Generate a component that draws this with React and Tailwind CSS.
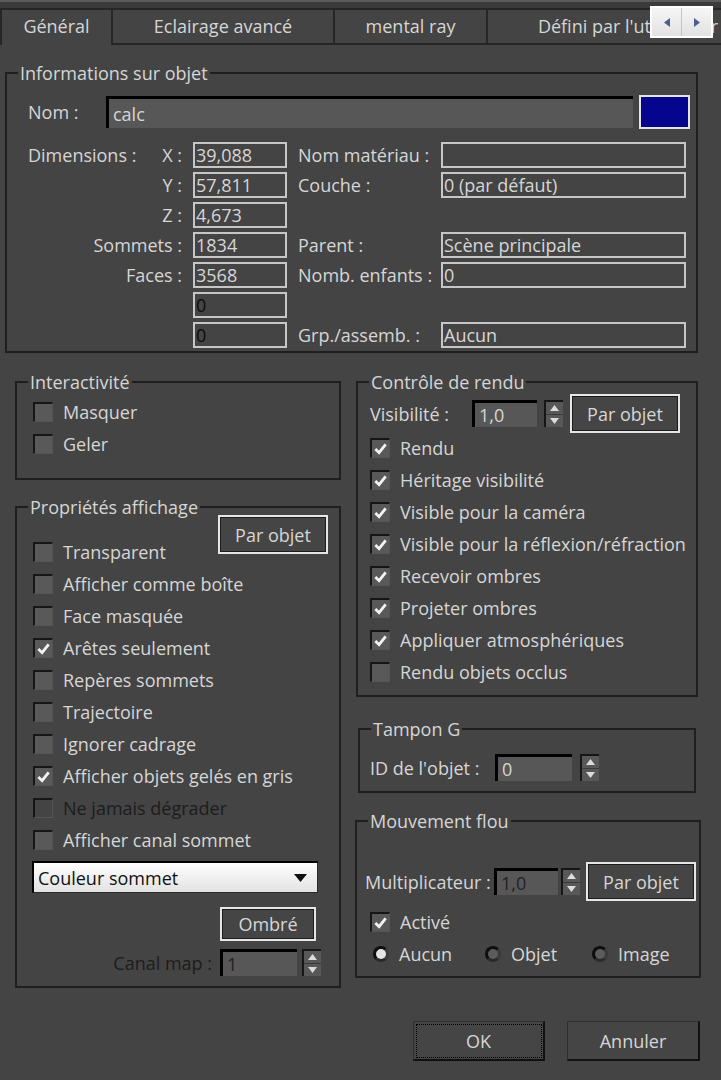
import React from "react";

const Tick = () => (
  <svg width="15" height="15" viewBox="0 0 16 16">
    <path d="M2.5 8.5 L6.5 12.5 L13.5 3.5" fill="none" stroke="#f2f2f2" strokeWidth="3" />
  </svg>
);

const Group = ({ title, className, children }) => (
  <fieldset className={`min-w-0 border-2 border-[#1f1f1f] ${className}`}>
    <legend className="ml-[11px] px-[2px] leading-[22px]">{title}</legend>
    {children}
  </fieldset>
);

const Check = ({ label, checked, disabled }) => (
  <div className="flex h-[32px] items-center">
    <span
      className={`flex h-[20px] w-[20px] shrink-0 items-center justify-center border-t-2 border-l-2 border-r border-b border-t-[#161616] border-l-[#161616] border-r-[#555] border-b-[#555] ${
        disabled ? "bg-[#444]" : "bg-[#595959]"
      }`}
    >
      {checked && <Tick />}
    </span>
    <span className={`ml-[10px] whitespace-nowrap ${disabled ? "text-[#1c1c1c]" : ""}`}>{label}</span>
  </div>
);

const Spin = ({ className = "" }) => (
  <div className={`flex h-[27px] w-[19px] shrink-0 flex-col border-t-2 border-l-2 border-t-[#161616] border-l-[#161616] bg-[#585858] ${className}`}>
    <div className="flex flex-1 items-center justify-center border-b border-[#3a3a3a]">
      <svg width="9" height="6" viewBox="0 0 9 6">
        <path d="M0 6 L4.5 0 L9 6Z" fill="#dcdcdc" />
      </svg>
    </div>
    <div className="flex flex-1 items-center justify-center">
      <svg width="9" height="6" viewBox="0 0 9 6">
        <path d="M0 0 L4.5 6 L9 0Z" fill="#dcdcdc" />
      </svg>
    </div>
  </div>
);

const Sunken = ({ value, dim, className }) => (
  <div
    className={`flex shrink-0 items-center whitespace-nowrap border-t-[3px] border-l-[3px] border-black bg-[#575757] pl-[4px] ${
      dim ? "text-[#222]" : ""
    } ${className}`}
  >
    {value}
  </div>
);

const Edit = ({ value, dim }) => (
  <div
    className={`flex h-[26px] items-center overflow-hidden whitespace-nowrap border-2 border-[#c6c6c6] pl-[1px] ${
      dim ? "text-[#0c0c0c]" : ""
    }`}
  >
    {value}
  </div>
);

const Btn = ({ children, className }) => (
  <button
    type="button"
    className={`flex shrink-0 items-center justify-center border-2 border-[#e6e6e6] bg-[#454545] shadow-[inset_0_0_0_1px_#1c1c1c] ${className}`}
  >
    {children}
  </button>
);

const Radio = ({ label, on, className = "" }) => (
  <div className={`flex items-center ${className}`}>
    <span
      className={`h-[16px] w-[16px] shrink-0 rounded-full border-[3px] border-t-[#0e0e0e] border-l-[#0e0e0e] border-r-[#3a3a3a] border-b-[#2a2a2a] ${
        on ? "bg-[#e4e4e4]" : "bg-[#5c5c5c]"
      }`}
    />
    <span className="ml-[10px]">{label}</span>
  </div>
);

const dims = [
  ["X :", "39,088", "Nom matériau :", ""],
  ["Y :", "57,811", "Couche :", "0 (par défaut)"],
  ["Z :", "4,673", null, null],
  ["Sommets :", "1834", "Parent :", "Scène principale"],
  ["Faces :", "3568", "Nomb. enfants :", "0"],
  ["", "0", null, null],
  ["", "0", "Grp./assemb. :", "Aucun"],
];

const display = [
  ["Transparent", false],
  ["Afficher comme boîte", false],
  ["Face masquée", false],
  ["Arêtes seulement", true],
  ["Repères sommets", false],
  ["Trajectoire", false],
  ["Ignorer cadrage", false],
  ["Afficher objets gelés en gris", true],
  ["Ne jamais dégrader", false, true],
  ["Afficher canal sommet", false],
];

const render = [
  ["Rendu", true],
  ["Héritage visibilité", true],
  ["Visible pour la caméra", true],
  ["Visible pour la réflexion/réfraction", true],
  ["Recevoir ombres", true],
  ["Projeter ombres", true],
  ["Appliquer atmosphériques", true],
  ["Rendu objets occlus", false],
];

export default function App() {
  return (
    <div className="relative flex h-[1080px] w-[721px] flex-col overflow-hidden bg-[#444] font-['Open_Sans',sans-serif] text-[18px] leading-[22px] text-[#d6d6d6]">
      {/* tabs */}
      <div className="relative h-[45px] shrink-0">
        <div className="h-[8px] border-t-2 border-[#5c5c5c] bg-[#3b3b3b]" />
        <div className="flex h-[37px]">
          <div className="flex w-[113px] shrink-0 items-center justify-center border-x-2 border-t-2 border-[#262626] pb-[4px]">Général</div>
          <div className="flex w-[222px] shrink-0 items-center justify-center border-r-2 border-t-2 border-b-2 border-[#262626] pb-[2px]">Eclairage avancé</div>
          <div className="flex w-[153px] shrink-0 items-center justify-center border-r-2 border-t-2 border-b-2 border-[#262626] pb-[2px]">mental ray</div>
          <div className="flex w-[280px] shrink-0 items-center justify-center whitespace-nowrap border-t-2 border-b-2 border-[#262626] pb-[2px]">Défini par l'utilisateur</div>
        </div>
        <div className="absolute left-[650px] top-[6px] flex h-[32px] w-[63px] border-2 border-white">
          <div className="flex flex-1 items-center justify-center border-r border-[#c4c4c4] bg-gradient-to-b from-[#f6f6f6] to-[#e2e2e2]">
            <svg width="6" height="9" viewBox="0 0 6 9">
              <path d="M6 0 L0 4.5 L6 9Z" fill="#4d5f8c" />
            </svg>
          </div>
          <div className="flex flex-1 items-center justify-center bg-gradient-to-b from-[#f6f6f6] to-[#e2e2e2]">
            <svg width="6" height="9" viewBox="0 0 6 9">
              <path d="M0 0 L6 4.5 L0 9Z" fill="#4d5f8c" />
            </svg>
          </div>
        </div>
      </div>

      {/* object info */}
      <Group title="Informations sur objet" className="ml-[5px] mt-[17px] h-[291px] w-[693px] shrink-0">
        <div className="ml-[21px] mt-[11px] flex h-[34px] items-center">
          <span className="w-[78px]">Nom :</span>
          <Sunken value="calc" className="h-[32px] w-[527px]" />
          <div className="ml-[6px] h-[34px] w-[51px] border-2 border-[#e4e4e4] bg-[#05058e]" />
        </div>
        <div className="ml-[21px] mt-[13px] grid auto-rows-[26px] grid-cols-[165px_103px_145px_245px] gap-y-[4px]">
          {dims.map(([l, v, l2, v2], i) => (
            <React.Fragment key={i}>
              <div className={`flex items-center pr-[11px] ${i === 0 ? "justify-between" : "justify-end"}`}>
                {i === 0 && <span>Dimensions :</span>}
                <span>{l}</span>
              </div>
              <div className="w-[94px]">
                <Edit value={v} dim={i > 4} />
              </div>
              <div className="flex items-center whitespace-nowrap pl-[2px]">{l2}</div>
              <div>{v2 !== null && <Edit value={v2} />}</div>
            </React.Fragment>
          ))}
        </div>
      </Group>

      <div className="ml-[15px] mt-[18px] flex">
        {/* left column */}
        <div className="flex w-[326px] shrink-0 flex-col">
          <Group title="Interactivité" className="h-[109px]">
            <div className="pl-[16px] pt-[3px]">
              <Check label="Masquer" />
              <Check label="Geler" />
            </div>
          </Group>

          <Group title="Propriétés affichage" className="mt-[16px] h-[492px]">
            <div className="flex">
              <div className="w-0 min-w-0 flex-1 pl-[16px] pt-[18px]">
                {display.map(([l, c, d]) => (
                  <Check key={l} label={l} checked={c} disabled={d} />
                ))}
              </div>
              <Btn className="mr-[11px] -mt-[3px] h-[39px] w-[110px] self-start">Par objet</Btn>
            </div>
            <div className="ml-[15px] mt-[5px] flex h-[32px] w-[286px] items-center justify-between border-t-2 border-l-2 border-r border-b border-t-black border-l-black border-r-[#2a2a2a] border-b-[#2a2a2a] bg-gradient-to-b from-[#ffffff] to-[#e2e2e2] pl-[4px] pr-[10px] text-[#111]">
              <span>Couleur sommet</span>
              <svg width="13" height="8" viewBox="0 0 13 8">
                <path d="M0 0 L13 0 L6.5 8Z" fill="#111" />
              </svg>
            </div>
            <Btn className="ml-[203px] mt-[14px] h-[34px] w-[96px]">Ombré</Btn>
            <div className="mt-[8px] flex h-[27px] items-center">
              <span className="w-[203px] pr-[8px] text-right text-[#1c1c1c]">Canal map :</span>
              <Sunken value="1" dim className="h-[27px] w-[77px]" />
              <Spin className="ml-[5px]" />
            </div>
          </Group>
        </div>

        {/* right column */}
        <div className="ml-[15px] flex w-[342px] shrink-0 flex-col">
          <Group title="Contrôle de rendu" className="h-[326px]">
            <div className="flex h-[39px] items-center pl-[12px] pt-[2px]">
              <span className="w-[102px] whitespace-nowrap">Visibilité :</span>
              <Sunken value="1,0" className="h-[27px] w-[65px]" />
              <Spin className="ml-[7px]" />
              <Btn className="ml-[7px] h-[39px] w-[110px]">Par objet</Btn>
            </div>
            <div className="pl-[12px]">
              {render.map(([l, c]) => (
                <Check key={l} label={l} checked={c} />
              ))}
            </div>
          </Group>

          <Group title="Tampon G" className="ml-[2px] mt-[21px] h-[75px] w-[338px]">
            <div className="mt-[14px] flex h-[27px] items-center pl-[10px]">
              <span className="w-[125px] whitespace-nowrap">ID de l'objet :</span>
              <Sunken value="0" className="h-[27px] w-[77px]" />
              <Spin className="ml-[8px]" />
            </div>
          </Group>

          <Group title="Mouvement flou" className="-ml-[1px] mt-[17px] h-[168px] w-[346px]">
            <div className="mt-[30px] flex h-[39px] items-center pl-[8px]">
              <span className="w-[129px] whitespace-nowrap">Multiplicateur :</span>
              <Sunken value="1,0" dim className="h-[27px] w-[64px]" />
              <Spin className="ml-[3px]" />
              <Btn className="ml-[6px] h-[39px] w-[110px]">Par objet</Btn>
            </div>
            <div className="mt-[5px] pl-[13px]">
              <Check label="Activé" checked />
            </div>
            <div className="flex h-[32px] items-center pl-[16px]">
              <Radio label="Aucun" on className="w-[112px]" />
              <Radio label="Objet" className="w-[107px]" />
              <Radio label="Image" />
            </div>
          </Group>
        </div>
      </div>

      {/* buttons */}
      <div className="mt-[33px] flex justify-end gap-[22px] pr-[21px]">
        <button
          type="button"
          className="flex h-[40px] w-[132px] items-center justify-center border border-r-2 border-b-2 border-t-[#2e2e2e] border-l-[#2e2e2e] border-r-[#111] border-b-[#111] bg-[#454545] outline-1 outline-dotted outline-black -outline-offset-4"
        >
          OK
        </button>
        <button
          type="button"
          className="flex h-[40px] w-[133px] items-center justify-center border border-r-2 border-b-2 border-t-[#2e2e2e] border-l-[#2e2e2e] border-r-[#111] border-b-[#111] bg-[#454545]"
        >
          Annuler
        </button>
      </div>
    </div>
  );
}
